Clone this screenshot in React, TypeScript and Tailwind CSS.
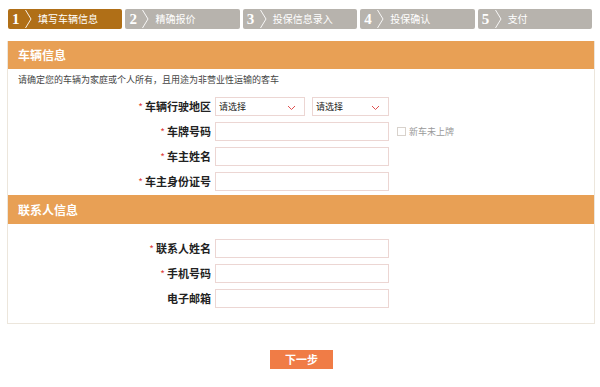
const steps = ["填写车辆信息", "精确报价", "投保信息录入", "投保确认", "支付"]

const font = { fontFamily: '"Noto Sans CJK SC", "Liberation Sans", sans-serif' }

function Step({ n, label, active }: { n: number; label: string; active: boolean }) {
  return (
    <div
      className={`flex-1 h-[20px] rounded-[2px] flex items-center text-white ${active ? "bg-[#b06f17]" : "bg-[#b7b3ad]"}`}
    >
      <span className="w-[15px] pl-[4px] text-[15px] font-bold leading-none [font-family:'Liberation_Serif',serif]">{n}</span>
      <svg width="9" height="20" viewBox="0 0 9 20" className="ml-[1px]">
        <polyline points="1.5,1 7,10 1.5,19" fill="none" stroke="#fff" strokeWidth="0.9" />
      </svg>
      <span className="ml-[5px] text-[10px] leading-none">{label}</span>
    </div>
  )
}

function Chevron() {
  return (
    <svg width="9" height="6" viewBox="0 0 9 6" className="absolute right-[8px] top-[7px]">
      <polyline points="1,1 4.5,4.5 8,1" fill="none" stroke="#e05050" strokeWidth="1" />
    </svg>
  )
}

function Label({ text, required = true }: { text: string; required?: boolean }) {
  return (
    <div className="w-[207px] flex justify-end items-center pr-[4px] text-[11px] font-bold text-[#222]">
      {required && <span className="text-[#e04040] text-[10px] mr-[2px] font-normal">*</span>}
      {text}
    </div>
  )
}

function Input() {
  return <div className="w-[174px] h-[19px] border border-[#ecd6d3] bg-white" />
}

function Header({ title, h }: { title: string; h: string }) {
  return (
    <div className={`${h} bg-[#e8a055] flex items-center pl-[10px] text-white text-[12px] font-bold`}>{title}</div>
  )
}

export default function App() {
  return (
    <div className="w-[600px] h-[387px] bg-white relative" style={font}>
      <div className="flex gap-[3px] px-[8px] pt-[9px]">
        {steps.map((s, i) => (
          <Step key={s} n={i + 1} label={s} active={i === 0} />
        ))}
      </div>

      <div className="mt-[12px] mx-[7px] w-[588px] border border-[#ece6dc] border-t-0">
        <Header title="车辆信息" h="h-[28px]" />
        <div className="pl-[10px] pt-[5px] text-[9px] leading-[12px] text-[#444]">
          请确定您的车辆为家庭或个人所有，且用途为非营业性运输的客车
        </div>

        <div className="flex flex-col gap-[6px] pt-[11px] pb-[4px]">
          <div className="flex h-[19px]">
            <Label text="车辆行驶地区" />
            <div className="relative w-[90px] h-[19px] border border-[#ecd6d3] text-[9px] leading-[17px] pl-[3px] text-[#222]">
              请选择
              <Chevron />
            </div>
            <div className="relative ml-[7px] w-[77px] h-[19px] border border-[#ecd6d3] text-[9px] leading-[17px] pl-[3px] text-[#222]">
              请选择
              <Chevron />
            </div>
          </div>
          <div className="flex h-[19px] items-center">
            <Label text="车牌号码" />
            <Input />
            <div className="ml-[8px] w-[9px] h-[9px] border border-[#d8d2cc]" />
            <span className="ml-[3px] text-[9px] text-[#999]">新车未上牌</span>
          </div>
          <div className="flex h-[19px]">
            <Label text="车主姓名" />
            <Input />
          </div>
          <div className="flex h-[19px]">
            <Label text="车主身份证号" />
            <Input />
          </div>
        </div>

        <Header title="联系人信息" h="h-[29px]" />

        <div className="flex flex-col gap-[6px] pt-[15px] pb-[15px]">
          <div className="flex h-[19px]">
            <Label text="联系人姓名" />
            <Input />
          </div>
          <div className="flex h-[19px]">
            <Label text="手机号码" />
            <Input />
          </div>
          <div className="flex h-[19px]">
            <Label text="电子邮箱" required={false} />
            <Input />
          </div>
        </div>
      </div>

      <div className="flex justify-center pt-[26px]">
        <button className="w-[63px] h-[19px] bg-[#f07c46] text-white text-[11px] font-bold ml-[3px]">下一步</button>
      </div>
    </div>
  )
}
